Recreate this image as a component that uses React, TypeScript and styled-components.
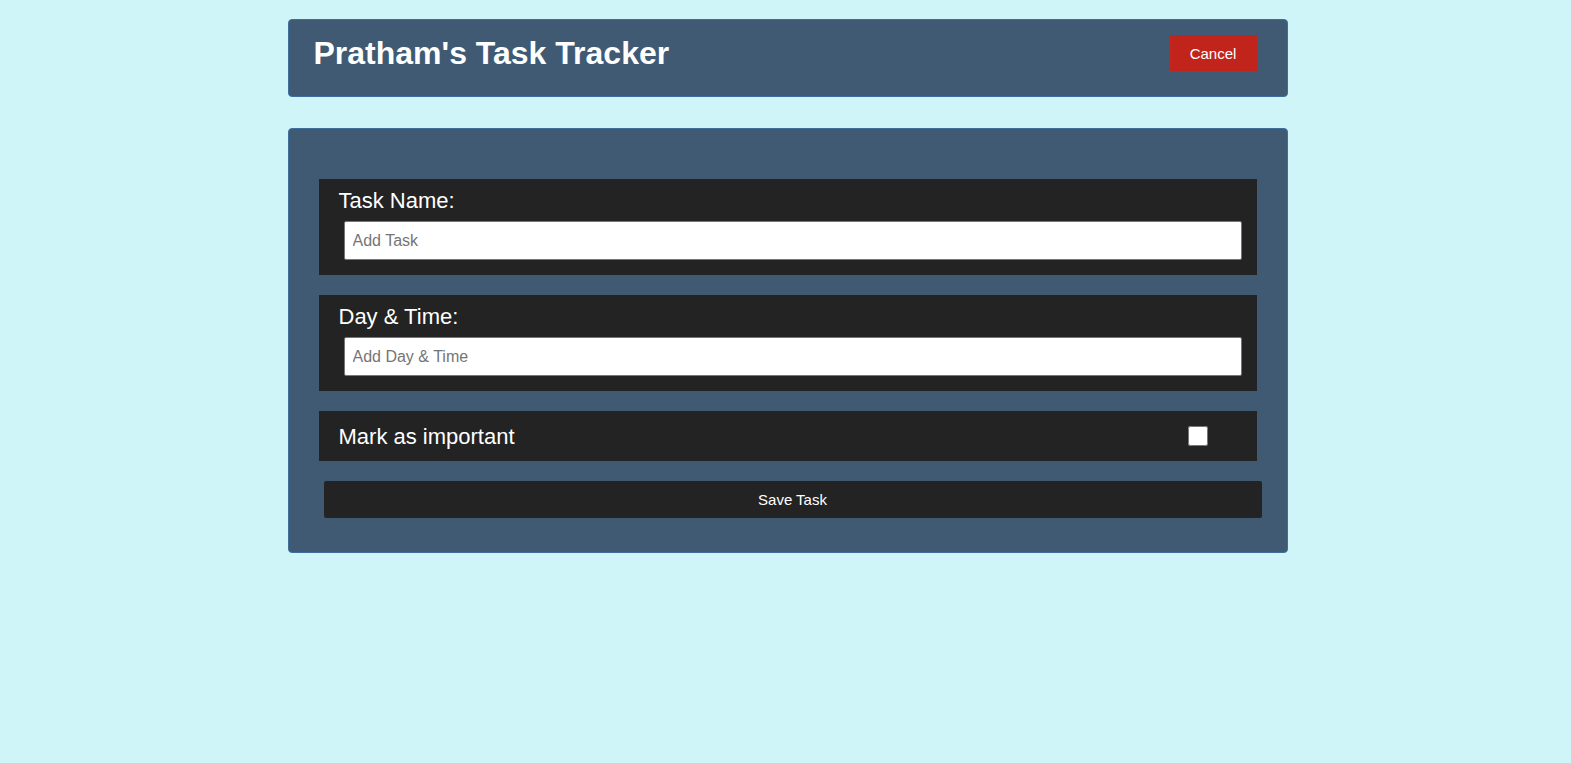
import React from "react";
import styled, { createGlobalStyle } from "styled-components";

const GlobalStyle = createGlobalStyle`
  body {
    margin: 0;
    background-color: #cff5f9;
    font-family: "Liberation Sans", Arial, sans-serif;
  }
`;

const Page = styled.div`
  width: 1000px;
  margin-left: calc(50% - 498px);
  padding-top: 19px;
`;

const Panel = styled.div`
  box-sizing: border-box;
  background-color: #405a73;
  border: 1px solid #3f6f9e;
  border-radius: 4px;
`;

const Header = styled(Panel)`
  height: 78px;
  display: flex;
  align-items: center;
  justify-content: space-between;
  padding: 0 30px 10px 25px;
`;

const Title = styled.h1`
  margin: 0;
  color: #ffffff;
  font-size: 32px;
  font-weight: bold;
`;

const CancelButton = styled.button`
  width: 87px;
  height: 36px;
  border: none;
  background-color: #c0241a;
  color: #ffffff;
  font-family: inherit;
  font-size: 15px;
  cursor: pointer;
`;

const FormCard = styled(Panel)`
  margin-top: 31px;
  padding: 50px 30px 34px 30px;
  display: flex;
  flex-direction: column;
  gap: 20px;
`;

const Field = styled.div`
  box-sizing: border-box;
  height: 96px;
  background-color: #232323;
  padding: 9px 15px 0 20px;
`;

const Label = styled.label`
  display: block;
  color: #ffffff;
  font-size: 22px;
  line-height: 25px;
`;

const TextInput = styled.input`
  box-sizing: border-box;
  display: block;
  width: calc(100% - 5px);
  height: 39px;
  margin: 8px 0 0 5px;
  padding: 0 8px;
  border: 1px solid #767676;
  border-radius: 2px;
  background: #ffffff;
  font-family: inherit;
  font-size: 16px;
  color: #222;

  &::placeholder {
    color: #757575;
  }
`;

const CheckRow = styled.div`
  box-sizing: border-box;
  height: 50px;
  background-color: #232323;
  display: flex;
  align-items: center;
  justify-content: space-between;
  padding: 0 49px 0 20px;
`;

const CheckBox = styled.input`
  width: 20px;
  height: 20px;
  margin: 0;
  accent-color: #ffffff;
`;

const SaveButton = styled.button`
  height: 37px;
  width: 100%;
  margin-left: 5px;
  border: none;
  border-radius: 2px;
  background-color: #232323;
  color: #ffffff;
  font-family: inherit;
  font-size: 15px;
  cursor: pointer;
`;

export default function App() {
  return (
    <>
      <GlobalStyle />
      <Page>
        <Header>
          <Title>Pratham's Task Tracker</Title>
          <CancelButton>Cancel</CancelButton>
        </Header>
        <FormCard as="form" onSubmit={(e: React.FormEvent) => e.preventDefault()}>
          <Field>
            <Label htmlFor="task">Task Name:</Label>
            <TextInput id="task" type="text" placeholder="Add Task" />
          </Field>
          <Field>
            <Label htmlFor="day">Day &amp; Time:</Label>
            <TextInput id="day" type="text" placeholder="Add Day & Time" />
          </Field>
          <CheckRow>
            <Label htmlFor="reminder">Mark as important</Label>
            <CheckBox id="reminder" type="checkbox" />
          </CheckRow>
          <SaveButton type="submit">Save Task</SaveButton>
        </FormCard>
      </Page>
    </>
  );
}
